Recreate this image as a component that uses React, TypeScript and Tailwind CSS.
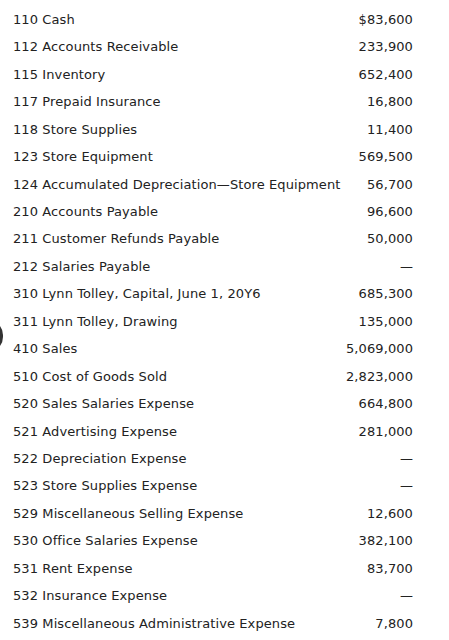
import React from "react";

const rows: [string, string][] = [
  ["110 Cash", "$83,600"],
  ["112 Accounts Receivable", "233,900"],
  ["115 Inventory", "652,400"],
  ["117 Prepaid Insurance", "16,800"],
  ["118 Store Supplies", "11,400"],
  ["123 Store Equipment", "569,500"],
  ["124 Accumulated Depreciation\u2014Store Equipment", "56,700"],
  ["210 Accounts Payable", "96,600"],
  ["211 Customer Refunds Payable", "50,000"],
  ["212 Salaries Payable", "\u2014"],
  ["310 Lynn Tolley, Capital, June 1, 20Y6", "685,300"],
  ["311 Lynn Tolley, Drawing", "135,000"],
  ["410 Sales", "5,069,000"],
  ["510 Cost of Goods Sold", "2,823,000"],
  ["520 Sales Salaries Expense", "664,800"],
  ["521 Advertising Expense", "281,000"],
  ["522 Depreciation Expense", "\u2014"],
  ["523 Store Supplies Expense", "\u2014"],
  ["529 Miscellaneous Selling Expense", "12,600"],
  ["530 Office Salaries Expense", "382,100"],
  ["531 Rent Expense", "83,700"],
  ["532 Insurance Expense", "\u2014"],
  ["539 Miscellaneous Administrative Expense", "7,800"],
];

export default function App() {
  return (
    <div
      className="relative w-[449px] h-[640px] overflow-hidden bg-white text-[13px] text-[#222] tracking-[0.1px]"
      style={{ fontFamily: "Verdana, 'DejaVu Sans', sans-serif" }}
    >
      <div className="absolute left-[-27px] top-[320px] w-[30px] h-[32px] rounded-full bg-[#333]" />
      <div className="pt-[6px] pl-[13px] w-[413px]">
        {rows.map(([label, amt]) => (
          <div key={label} className="flex items-center justify-between h-[27.45px] whitespace-nowrap">
            <span>{label}</span>
            <span>{amt}</span>
          </div>
        ))}
      </div>
    </div>
  );
}
